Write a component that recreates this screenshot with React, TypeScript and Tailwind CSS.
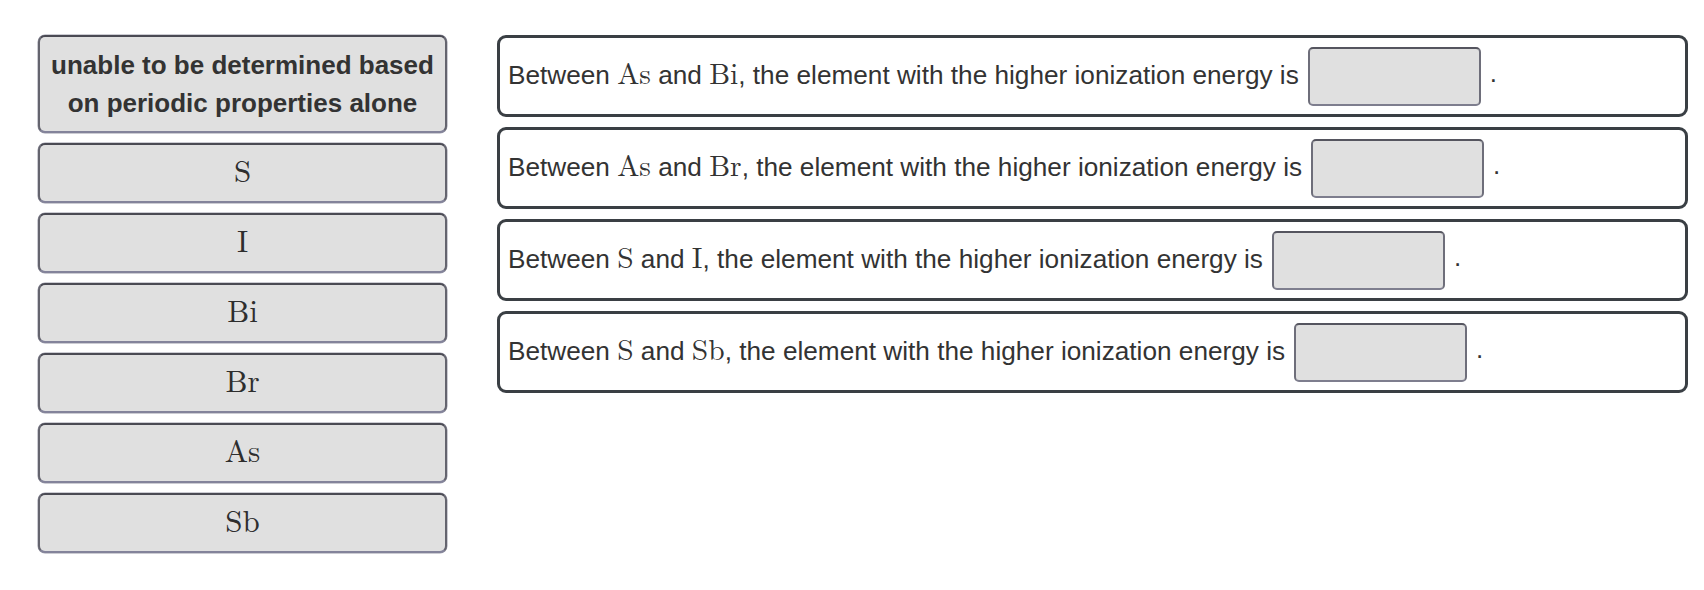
import React from "react";

const sans = "font-['Helvetica','Liberation_Sans',Arial,sans-serif]";
const serif = "font-['Latin_Modern_Roman','Liberation_Serif','Times_New_Roman',serif]";

const choices = ["S", "I", "Bi", "Br", "As", "Sb"];

const statements: [string, string][] = [
  ["As", "Bi"],
  ["As", "Br"],
  ["S", "I"],
  ["S", "Sb"],
];

function Tile({ children, tall }: { children: React.ReactNode; tall?: boolean }) {
  return (
    <div
      className={`flex items-center justify-center rounded-[7px] border-[2.5px] border-t-[#4a4a53] border-x-[#64646e] border-b-[#83839a] bg-[#e0e0e0] shadow-[0_0_0_0.5px_#9a9aa8] ${
        tall ? "h-[98px]" : "h-[60px]"
      }`}
    >
      {children}
    </div>
  );
}

function Sym({ children }: { children: React.ReactNode }) {
  return <span className={`${serif} text-[29.5px] leading-none`}>{children}</span>;
}

export default function App() {
  return (
    <div className={`min-h-[590px] w-[1704px] bg-white pl-[38px] pt-[35px] text-[#333] ${sans}`}>
      <div className="flex items-start gap-[50px]">
        {/* answer bank */}
        <div className="flex w-[409px] shrink-0 flex-col gap-[10px]">
          <Tile tall>
            <div className="text-center text-[26px] font-bold leading-[38px] text-[#333]">
              unable to be determined based
              <br />
              on periodic properties alone
            </div>
          </Tile>
          {choices.map((c) => (
            <Tile key={c}>
              <span className={`${serif} mb-[8px] text-[31px] leading-none text-[#2e2e2e]`}>{c}</span>
            </Tile>
          ))}
        </div>

        {/* drop targets */}
        <div className="flex w-[1191px] shrink-0 flex-col gap-[10px]">
          {statements.map(([a, b]) => (
            <div
              key={a + b}
              className="flex h-[82px] items-center rounded-[9px] border-[3px] border-[#3a3f44] bg-white pl-[8px]"
            >
              <span className="mb-[6px] whitespace-pre text-[26.2px] leading-none text-[#333]">
                {"Between "}
                <Sym>{a}</Sym>
                {" and "}
                <Sym>{b}</Sym>
                {", the element with the higher ionization energy is"}
              </span>
              <div className="ml-[9px] h-[59px] w-[173px] shrink-0 rounded-[5px] border-[2.5px] border-t-[#55555f] border-x-[#6e6e7a] border-b-[#7e7e8e] bg-[#e0e0e0]" />
              <span className="mb-[6px] ml-[9px] text-[26px] leading-none text-[#333]">.</span>
            </div>
          ))}
        </div>
      </div>
    </div>
  );
}
